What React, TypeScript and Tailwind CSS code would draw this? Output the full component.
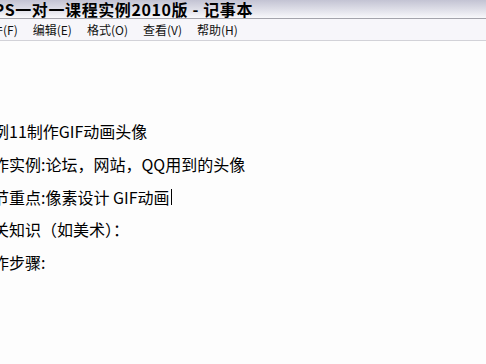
import React from "react";

const cjk = { fontFamily: '"Noto Sans CJK SC", "Noto Sans", sans-serif' };

const menus = ["文件(F)", "编辑(E)", "格式(O)", "查看(V)", "帮助(H)"];

const lines = [
  "实例11制作GIF动画头像",
  "制作实例:论坛，网站，QQ用到的头像",
  "本节重点:像素设计 GIF动画",
  "相关知识（如美术）：",
  "制作步骤:",
];

export default function App() {
  return (
    <div className="w-[486px] h-[364px] overflow-hidden bg-[#fdfdfd] flex flex-col" style={cjk}>
      <div className="h-[19px] shrink-0 bg-gradient-to-b from-[#c3c3d3] to-[#f8f8fb] border-b border-[#a4a4ac] flex items-center overflow-hidden">
        <span className="ml-[-23px] whitespace-nowrap text-[16px] leading-none font-bold text-black tracking-[0.6px]">
          《PS一对一课程实例2010版 - 记事本
        </span>
      </div>
      <div className="h-[22px] shrink-0 bg-[#f7f6fa] border-b border-[#d2d2d8] flex items-center gap-[15px] overflow-hidden">
        {menus.map((m, i) => (
          <span
            key={m}
            className={`whitespace-nowrap text-[12px] leading-none text-[#111] ${i === 0 ? "ml-[-21px]" : ""}`}
          >
            {m}
          </span>
        ))}
      </div>
      <div className="flex flex-col pt-[74px] ml-[-23px]">
        {lines.map((l, i) => (
          <div key={i} className="h-[32.7px] flex items-center whitespace-nowrap text-[16px] leading-none text-black">
            {l}
            {i === 2 && <span className="inline-block w-px h-[16px] bg-black ml-[1px]" />}
          </div>
        ))}
      </div>
    </div>
  );
}
